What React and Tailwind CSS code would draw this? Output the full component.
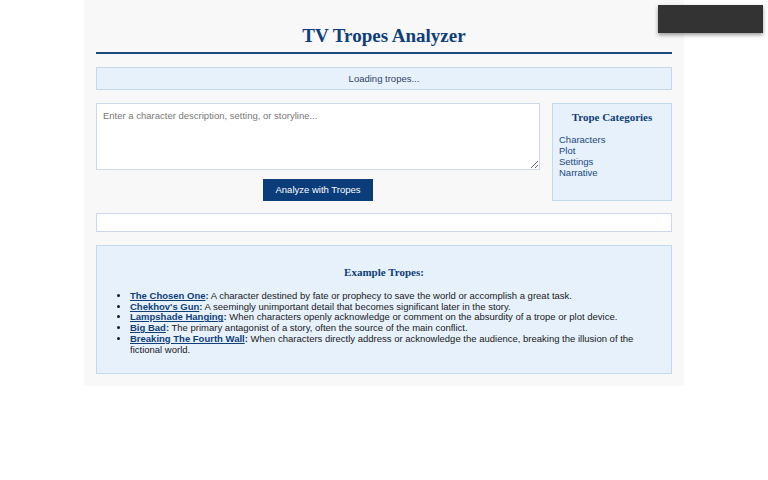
import React, { useState } from 'react';

const tropes = [
  { name: 'The Chosen One', desc: 'A character destined by fate or prophecy to save the world or accomplish a great task.' },
  { name: "Chekhov's Gun", desc: 'A seemingly unimportant detail that becomes significant later in the story.' },
  { name: 'Lampshade Hanging', desc: 'When characters openly acknowledge or comment on the absurdity of a trope or plot device.' },
  { name: 'Big Bad', desc: 'The primary antagonist of a story, often the source of the main conflict.' },
  { name: 'Breaking The Fourth Wall', desc: 'When characters directly address or acknowledge the audience, breaking the illusion of the fictional world.' },
];

const categories = ['Characters', 'Plot', 'Settings', 'Narrative'];

const App = () => {
  const [text, setText] = useState('');

  return (
    <div className="min-h-[480px] bg-white font-['Liberation_Sans',Arial,sans-serif]">
      {/* Toast */}
      <div className="absolute right-[5px] top-[5px] h-[28px] w-[105px] bg-[#333333] shadow-[0_2px_4px_rgba(0,0,0,0.4)]"></div>

      {/* Main container */}
      <div className="mx-auto w-[600px] bg-[#f8f8f8] px-3 pb-3 pt-[24px]">
        <h1 className="border-b-2 border-[#1a4a80] pb-[5px] text-center font-['Liberation_Serif',serif] text-[19px] font-bold leading-[23px] text-[#0f3f78]">
          TV Tropes Analyzer
        </h1>

        <div className="mt-[13px] h-[23px] border border-[#c5d9ee] bg-[#e6f1fc] text-center text-[9.5px] leading-[21px] text-[#334466]">
          Loading tropes...
        </div>

        <div className="mt-[13px] flex gap-3">
          <div className="flex flex-1 flex-col">
            <textarea
              value={text}
              onChange={(e) => setText(e.target.value)}
              placeholder="Enter a character description, setting, or storyline..."
              className="h-[67px] w-full resize-y border border-[#cdd9ea] bg-white px-[6px] py-[6px] text-[9.5px] leading-[11px] text-[#333] placeholder:text-[#777]"
            />
            <div className="mt-[9px] flex justify-center">
              <button className="h-[22px] w-[110px] bg-[#0a3d7a] text-[9.5px] text-white">Analyze with Tropes</button>
            </div>
          </div>

          <div className="h-[98px] w-[120px] border border-[#c5d9ee] bg-[#e6f1fc] px-[6px] pt-[7px]">
            <h3 className="text-center font-['Liberation_Serif',serif] text-[11px] font-bold leading-[13px] text-[#0f3f78]">
              Trope Categories
            </h3>
            <ul className="mt-[10px] text-[9.5px] leading-[11px] text-[#1a4a80]">
              {categories.map((c) => (
                <li key={c}>{c}</li>
              ))}
            </ul>
          </div>
        </div>

        <div className="mt-3 h-[19px] border border-[#cdd9ea] bg-white"></div>

        <div className="mt-[13px] border border-[#c5d9ee] bg-[#e6f1fc] px-3 pb-[18px] pt-[20px]">
          <h3 className="text-center font-['Liberation_Serif',serif] text-[11px] font-bold leading-[13px] text-[#0f3f78]">
            Example Tropes:
          </h3>
          <ul className="mt-[12px] list-disc pl-[21px] text-[9.5px] leading-[10.7px] text-[#1a1a1a]">
            {tropes.map((t) => (
              <li key={t.name}>
                <a href="#" className="font-bold text-[#0f3f78] underline">{t.name}</a>
                <b className="text-[#0f3f78]">:</b> {t.desc}
              </li>
            ))}
          </ul>
        </div>
      </div>
    </div>
  );
};

export default App;
